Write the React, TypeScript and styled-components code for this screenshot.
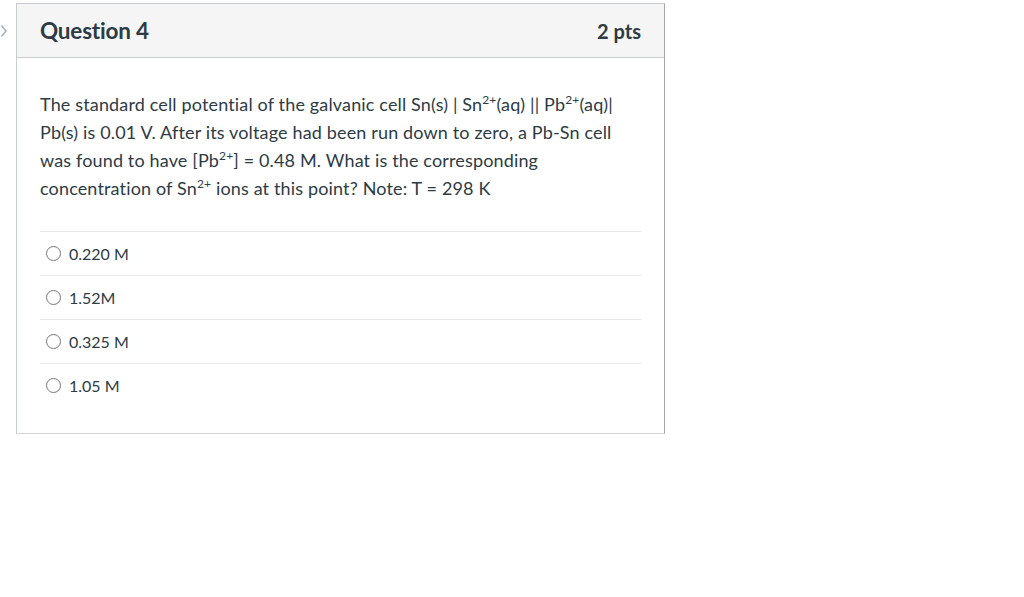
import React from "react";
import styled, { createGlobalStyle } from "styled-components";

const Global = createGlobalStyle`
  html, body { margin: 0; padding: 0; background: #fff; }
  body { font-family: Lato, "Open Sans", sans-serif; color: #2d3b45; }
`;

const Page = styled.div`
  display: flex;
  align-items: flex-start;
  padding-top: 3px;
`;

const Gutter = styled.div`
  width: 16px;
  display: flex;
  justify-content: flex-start;
  padding-top: 21px;
`;

const Card = styled.div`
  width: 649px;
  border: 1px solid #c7cdd1;
  border-right-color: #a5a5a5;
  border-bottom-color: #d7d7d7;
  background: #fff;
  box-sizing: border-box;
`;

const Header = styled.div`
  height: 53px;
  background: #f5f5f5;
  border-bottom: 1px solid #c7cdd1;
  display: flex;
  align-items: center;
  justify-content: space-between;
  padding: 0 23px 0 23px;
`;

const Title = styled.h2`
  margin: 0;
  font-size: 22.5px;
  font-weight: 700;
  color: #2d3b45;
  letter-spacing: -0.2px;
`;

const Points = styled.span`
  font-size: 20px;
  font-weight: 700;
  color: #2d3b45;
`;

const Body = styled.div`
  padding: 32px 23px 26px 23px;
`;

const Question = styled.p`
  margin: 0 0 29px 0;
  max-width: 601px;
  font-size: 18px;
  letter-spacing: 0.15px;
  line-height: 28px;
  color: #2d3b45;
  sup {
    font-size: 12px;
    line-height: 0;
    vertical-align: 0.55em;
  }
`;

const Answers = styled.div`
  display: flex;
  flex-direction: column;
`;

const Answer = styled.label`
  display: flex;
  align-items: center;
  gap: 8px;
  height: 44px;
  border-top: 1px solid #e6e6e6;
  padding-left: 6px;
  font-size: 16px;
  color: #2d3b45;
  box-sizing: border-box;
`;

const Radio = styled.span`
  width: 15px;
  height: 15px;
  border: 1px solid #767676;
  border-radius: 50%;
  box-sizing: border-box;
  background: #fff;
`;

const answers = ["0.220 M", "1.52M", "0.325 M", "1.05 M"];

export default function App() {
  return (
    <>
      <Global />
      <Page>
        <Gutter>
          <svg width="8" height="14" viewBox="0 0 8 14">
            <path d="M1.5 1.5 L6 7 L1.5 12.5" fill="none" stroke="#9db3c8" strokeWidth="1.5" />
          </svg>
        </Gutter>
        <Card>
          <Header>
            <Title>Question 4</Title>
            <Points>2 pts</Points>
          </Header>
          <Body>
            <Question>
              The standard cell potential of the galvanic cell Sn(s) | Sn<sup>2+</sup>(aq) || Pb<sup>2+</sup>(aq)|
              Pb(s) is 0.01 V. After its voltage had been run down to zero, a Pb-Sn cell was found to have [Pb
              <sup>2+</sup>] = 0.48 M. What is the corresponding concentration of Sn<sup>2+</sup> ions at this
              point? Note: T = 298 K
            </Question>
            <Answers>
              {answers.map((a) => (
                <Answer key={a}>
                  <Radio />
                  {a}
                </Answer>
              ))}
            </Answers>
          </Body>
        </Card>
      </Page>
    </>
  );
}
